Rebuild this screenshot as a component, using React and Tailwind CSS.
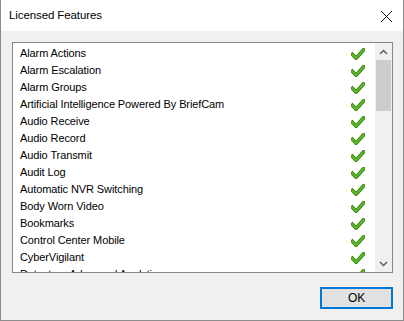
import React from "react";

const features = [
	"Alarm Actions",
	"Alarm Escalation",
	"Alarm Groups",
	"Artificial Intelligence Powered By BriefCam",
	"Audio Receive",
	"Audio Record",
	"Audio Transmit",
	"Audit Log",
	"Automatic NVR Switching",
	"Body Worn Video",
	"Bookmarks",
	"Control Center Mobile",
	"CyberVigilant",
	"Datastore Advanced Analytics",
];

const Check = () => (
	<svg width="14" height="12" viewBox="0 0 15 13">
		<path
			d="M1.5 7 L5.5 11 L13.5 2"
			fill="none"
			stroke="#2f7d0a"
			strokeWidth="4"
			strokeLinecap="square"
		/>
		<path
			d="M1.5 7 L5.5 11 L13.5 2"
			fill="none"
			stroke="#5cb82a"
			strokeWidth="2.4"
			strokeLinecap="square"
		/>
	</svg>
);

const App = () => {
	return (
		<div
			className="w-[404px] h-[321px] bg-[#f0f0f0] border-x border-b border-[#8c8c8c] flex flex-col text-[11px] tracking-[-0.1px] text-black overflow-hidden"
			style={{ fontFamily: '"Liberation Sans", Arial, sans-serif' }}>
			<div className="h-[31px] bg-white flex items-center justify-between pl-[8px] pr-[10px] pt-[1px] shrink-0">
				<span className="text-[11.5px]">Licensed Features</span>
				<svg width="13" height="13" viewBox="0 0 13 13">
					<path d="M1 1 L12 12 M12 1 L1 12" stroke="#111" strokeWidth="1" />
				</svg>
			</div>

			<div className="flex flex-col pl-[11px] pr-[10px] pt-[11px]">
				<div className="h-[231px] border border-[#828790] bg-white flex overflow-hidden">
					<div className="flex-1 flex flex-col pt-[2px] overflow-hidden">
						{features.map((f) => (
							<div
								key={f}
								className="h-[17px] shrink-0 flex items-center justify-between pl-[7px] pr-[10px]">
								<span className="whitespace-nowrap">{f}</span>
								<Check />
							</div>
						))}
					</div>
					<div className="w-[17px] bg-[#f0f0f0] flex flex-col items-center shrink-0">
						<div className="h-[17px] flex items-center justify-center">
							<svg width="9" height="6" viewBox="0 0 9 6">
								<path d="M1 5 L4.5 1.5 L8 5" fill="none" stroke="#606060" strokeWidth="1.5" />
							</svg>
						</div>
						<div className="w-[15px] h-[51px] bg-[#cdcdcd]" />
						<div className="flex-1" />
						<div className="h-[17px] flex items-center justify-center">
							<svg width="9" height="6" viewBox="0 0 9 6">
								<path d="M1 1 L4.5 4.5 L8 1" fill="none" stroke="#606060" strokeWidth="1.5" />
							</svg>
						</div>
					</div>
				</div>

				<div className="flex justify-end mt-[14px]">
					<button className="w-[73px] h-[22px] border-2 border-[#0078d7] bg-[#e1e1e1] text-[12px] flex items-center justify-center">
						OK
					</button>
				</div>
			</div>
		</div>
	);
};

export default App;
